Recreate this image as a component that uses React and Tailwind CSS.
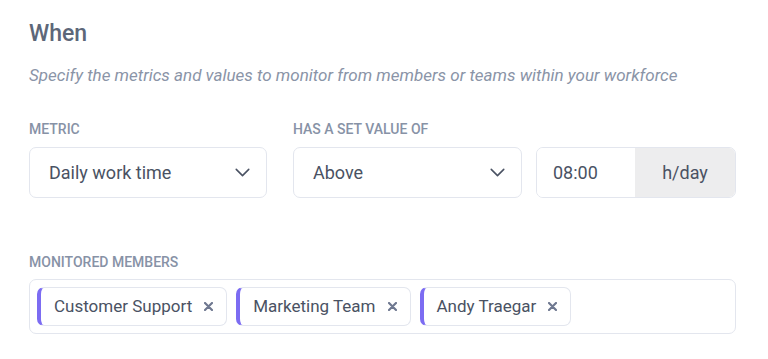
import { ChevronDown } from 'lucide-react'

const MEMBERS = ['Customer Support', 'Marketing Team', 'Andy Traegar']

function Select({ value, className }) {
  return (
    <div className={'h-[51px] flex items-center justify-between pl-[19px] pr-[11px] border border-[#e3e6ee] rounded-[7px] bg-white ' + className}>
      <span className="text-[18px] text-[#4a5263]">{value}</span>
      <ChevronDown className="w-[25px] h-[25px] text-[#4a5263]" strokeWidth={1.5} />
    </div>
  )
}

function Tag({ label }) {
  return (
    <div className="h-[39px] flex items-center gap-[12px] pl-[13px] pr-[13px] border border-[#e3e6ee] border-l-[4px] border-l-[#7c6cf2] rounded-[7px] bg-white">
      <span className="text-[17px] text-[#4a5263]">{label}</span>
      <svg width="9" height="9" viewBox="0 0 9 9" className="text-[#6f7890]">
        <path d="M1 1L8 8M8 1L1 8" stroke="currentColor" strokeWidth="2.2" strokeLinecap="round" />
      </svg>
    </div>
  )
}

export default function App() {
  return (
    <div className="w-[768px] h-[359px] bg-white pl-[29px] pt-[19px] font-['Roboto',sans-serif]">
      <div className="w-[707px]">
        <h2 className="text-[23px] leading-[30px] font-medium text-[#5d6779]">When</h2>
        <p className="mt-[14px] text-[17px] leading-[24px] italic text-[#8a94a7]">
          Specify the metrics and values to monitor from members or teams within your workforce
        </p>

        <div className="mt-[34px] flex gap-[26px]">
          <div className="w-[238px]">
            <div className="text-[14px] leading-[16px] font-medium uppercase text-[#8792a6] mb-[10px]">Metric</div>
            <Select value="Daily work time" className="w-full" />
          </div>
          <div className="flex-1">
            <div className="text-[14px] leading-[16px] font-medium uppercase text-[#8792a6] mb-[10px]">Has a set value of</div>
            <div className="flex gap-[14px]">
              <Select value="Above" className="w-[229px]" />
              <div className="w-[200px] h-[51px] flex border border-[#e3e6ee] rounded-[7px] overflow-hidden">
                <div className="w-[98px] flex items-center pl-[16px] text-[18px] text-[#4a5263] bg-white">08:00</div>
                <div className="flex-1 flex items-center justify-center text-[18px] text-[#4a5263] bg-[#ededee]">h/day</div>
              </div>
            </div>
          </div>
        </div>

        <div className="mt-[56px] text-[14px] leading-[16px] font-medium uppercase text-[#8792a6]">Monitored members</div>
        <div className="mt-[9px] h-[55px] flex items-center gap-[9px] px-[7px] border border-[#e3e6ee] rounded-[7px]">
          {MEMBERS.map((m) => (
            <Tag key={m} label={m} />
          ))}
        </div>
      </div>
    </div>
  )
}
